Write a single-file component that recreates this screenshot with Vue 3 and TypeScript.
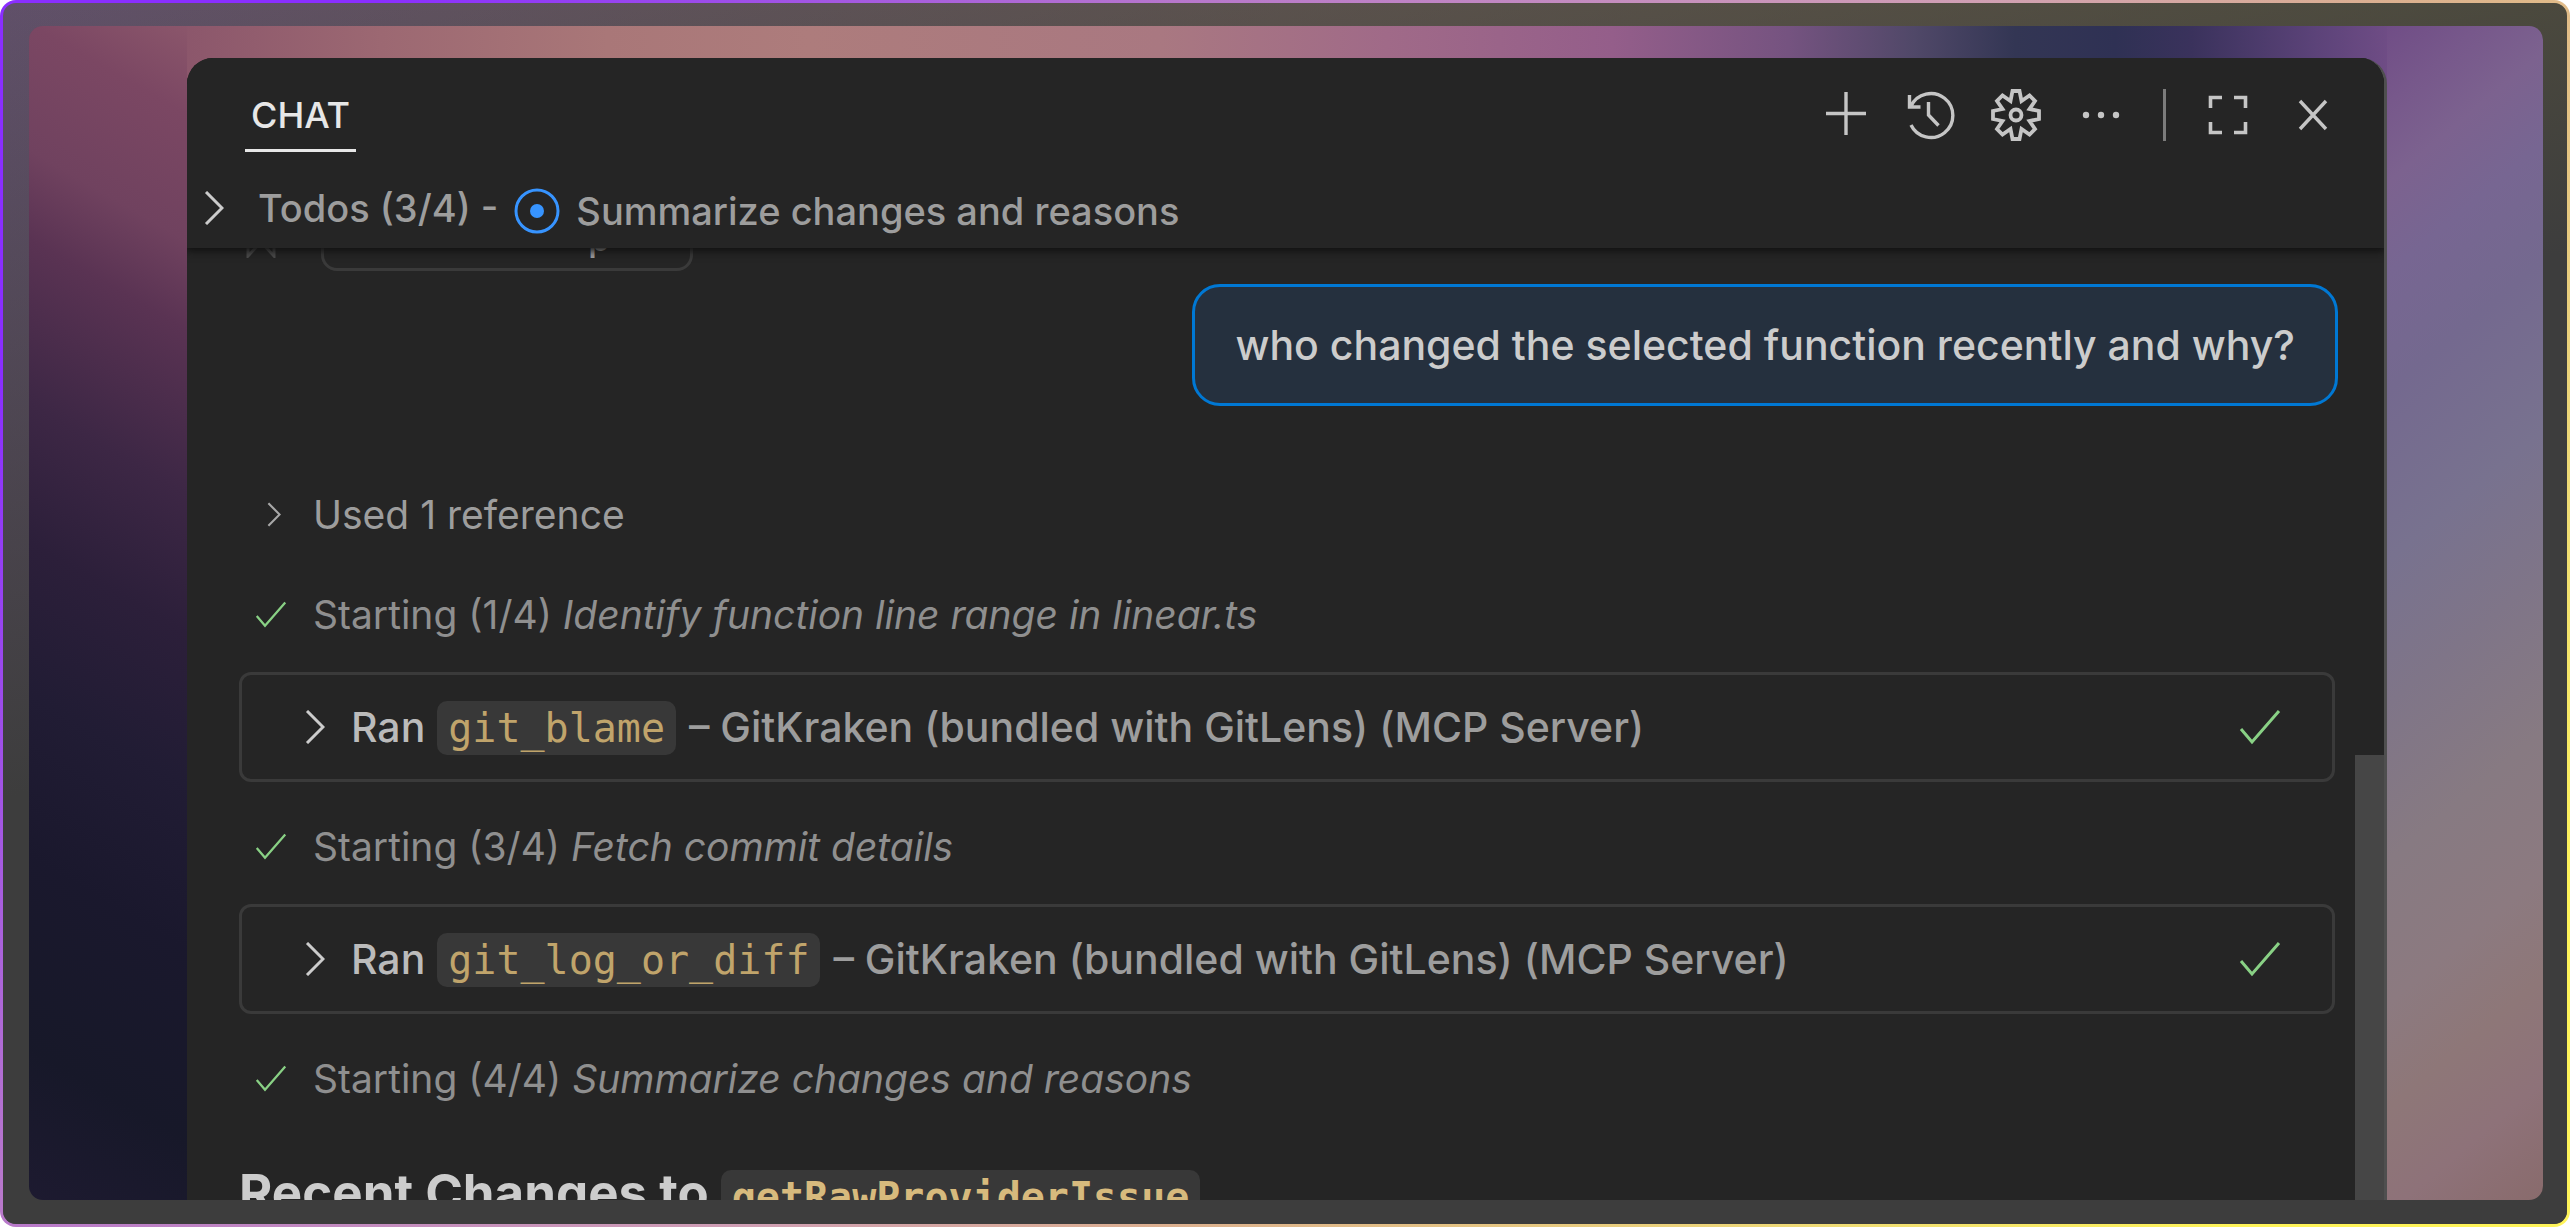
<script setup lang="ts">
interface Step { n: string; title: string; tool?: string }
const steps: Step[] = [
  { n: '1/4', title: 'Identify function line range in linear.ts', tool: 'git_blame' },
  { n: '3/4', title: 'Fetch commit details', tool: 'git_log_or_diff' },
  { n: '4/4', title: 'Summarize changes and reasons' },
]
</script>

<template>
  <div class="frame">
    <div class="backdrop">
      <main class="panel">
        <header class="head">
          <div class="titlebar">
            <h1 class="tab">CHAT</h1>
            <div class="tools">
              <button class="tool" aria-label="New chat">
                <svg viewBox="0 0 52 52" fill="none" stroke="#c5c5c5" stroke-width="3.400"><path d="M6 24.500H46M26 3V46" /></svg>
              </button>
              <button class="tool" aria-label="Chat history">
                <svg viewBox="0 0 52 52" fill="none" stroke="#c5c5c5" stroke-width="3.400"><path d="M4.500 6V18H15.500M6 17A22 22 0 1 1 6 36M23.500 13V26L33.500 36.500" /></svg>
              </button>
              <button class="tool" aria-label="Settings">
                <svg viewBox="0 0 52 52" fill="none" stroke="#c5c5c5" stroke-width="3.800"><path d="M22.500 2H29.500L31.500 12L39.500 6.500L45 12L39.500 20L49 22V30L39.500 32L45 40L39.500 45.500L31.500 40L29.500 50H22.500L20.500 40L12.500 45.500L7 40L12.500 32L3 30V22L12.500 20L7 12L12.500 6.500L20.500 12Z" /><circle cx="26" cy="26" r="5.500" /></svg>
              </button>
              <button class="tool" aria-label="More actions">
                <svg viewBox="0 0 52 52" fill="#c5c5c5"><circle cx="11" cy="26" r="3.200" /><circle cx="26" cy="26" r="3.200" /><circle cx="41" cy="26" r="3.200" /></svg>
              </button>
              <span class="divider"></span>
              <button class="tool" aria-label="Maximize">
                <svg viewBox="0 0 52 52" fill="none" stroke="#c5c5c5" stroke-width="3.600"><path d="M8.500 19V8.500H20M32 8.500H43.500V19M43.500 33V43.500H32M20 43.500H8.500V33" /></svg>
              </button>
              <button class="tool" aria-label="Close">
                <svg viewBox="0 0 52 52" fill="none" stroke="#c5c5c5" stroke-width="3.400"><path d="M13 12L39 40M39 12L13 40" /></svg>
              </button>
            </div>
          </div>
          <button class="todos">
            <svg class="chev" viewBox="0 0 20 34"><path d="M2 1L18 17L2 33" /></svg>
            <span class="count">Todos (3/4) -</span>
            <span class="now">
              <svg class="ring" viewBox="0 0 46 46"><circle cx="23" cy="23" r="21" fill="none" stroke="#3794ff" stroke-width="3" /><circle cx="23" cy="23" r="7" fill="#3794ff" /></svg>
              Summarize changes and reasons
            </span>
          </button>
        </header>

        <section class="body">
          <div class="scrolled">
            <svg class="bookmark" viewBox="0 0 30 40"><path d="M2 0V38L15 24L28 38V0" /></svg>
            <span class="chip">p</span>
          </div>
          <p class="bubble">who changed the selected function recently and why?</p>
          <button class="refs">
            <svg class="chev small" viewBox="0 0 20 34"><path d="M2 1L18 17L2 33" /></svg>
            <span>Used 1 reference</span>
          </button>
          <template v-for="s in steps" :key="s.n">
            <p class="step">
              <svg class="tick" viewBox="0 0 42 36"><path d="M2 20L13 33L40 2" /></svg>
              <span>Starting ({{ s.n }}) <em>{{ s.title }}</em></span>
            </p>
            <button v-if="s.tool" class="run">
              <svg class="chev" viewBox="0 0 20 34"><path d="M2 1L18 17L2 33" /></svg>
              <span class="label"><b>Ran</b> <code>{{ s.tool }}</code> – GitKraken (bundled with GitLens) (MCP Server)</span>
              <svg class="tick big" viewBox="0 0 42 36"><path d="M2 20L13 33L40 2" /></svg>
            </button>
          </template>
          <h2 class="result">Recent Changes to <code>getRawProviderIssue</code></h2>
          <span class="thumb"></span>
        </section>
      </main>
    </div>
  </div>
</template>

<style>
body { margin: 0; background: #fff; }
</style>

<style scoped>
.frame {
  box-sizing: border-box;
  height: 100vh;
  display: flex;
  padding: 23px 24px 24px 26px;
  border: 3px solid transparent;
  border-radius: 16px;
  background:
    linear-gradient(168deg, rgba(61, 61, 61, 0) 0%, #3d3d3d 45%) padding-box,
    linear-gradient(90deg, #605069 0%, #695c55 50%, #69633f 100%) padding-box,
    linear-gradient(135deg, #8a2eff 0%, #8a2eff 10%, #b777cc 31%, #d09fb4 52%, #dcb090 63%, #f0dd75 81%, #fff45a 91%) border-box;
  font-family: Inter, "Liberation Sans", sans-serif;
  font-size: 38px;
  font-weight: 450;
  color: #9d9d9d;
}
.backdrop {
  flex: 1;
  min-width: 0;
  display: flex;
  padding: 32px 156px 0 158px;
  border-radius: 14px;
  overflow: hidden;
  background:
    linear-gradient(210deg, #8b566b 0%, #7b4763 7%, #70425f 17%, #5a3353 24%, #3d2745 37%, #2c1f3a 48%, #211c34 60%, #1a182d 73%, #171829 88%, #1d1a30 100%) left / 158px 100% no-repeat,
    linear-gradient(140deg, #704d86 0%, #77588b 6%, #7c628f 12%, #776692 19%, #74698f 28%, #78728f 41%, #7f7588 52%, #877a82 64%, #8c7a80 75%, #8e7778 83%, #8e7279 91%, #896b6c 100%) right / 156px 100% no-repeat,
    linear-gradient(90deg, #7b4763 0%, #8b566b 6%, #9c6872 14%, #a97778 23%, #ad7c7c 31%, #a97881 45%, #a06a88 54%, #945e8a 63%, #755380 70%, #504868 75%, #333654 79%, #2f3154 83%, #3a325c 86%, #5c4379 91%, #704d86 94%);
}
.panel {
  flex: 1;
  min-width: 0;
  display: flex;
  flex-direction: column;
  box-sizing: border-box;
  border-right: 3px solid #4f4f4f;
  border-radius: 26px 26px 0 0;
  background: #252525;
  overflow: hidden;
}
button {
  border: 0;
  padding: 0;
  margin: 0;
  background: none;
  color: inherit;
  font: inherit;
  text-align: left;
}
.head { position: relative; z-index: 1; height: 190px; background: #252525; box-shadow: 0 2px 8px 1px #101010; }
.titlebar { display: flex; justify-content: space-between; height: 114px; }
.tab {
  box-sizing: border-box;
  margin: 0 0 20px 58px;
  padding: 0 6px;
  border-bottom: 3px solid #e7e7e7;
  font-size: 36px;
  line-height: 114px;
  font-weight: 450;
  color: #e7e7e7;
}
.tools { display: flex; align-items: center; gap: 33px; margin-right: 45px; }
.tool, .tool svg { display: block; width: 52px; height: 52px; }
.divider { width: 3px; height: 52px; margin: 0 3px; background: #7c7c7c; }
.todos { display: flex; align-items: center; height: 72px; padding-left: 17px; }
.chev { width: 20px; height: 34px; fill: none; stroke: #cccccc; stroke-width: 3; }
.count { margin-left: 34px; }
.now { display: flex; align-items: center; padding-top: 5px; }
.ring { width: 46px; height: 46px; margin: 0 16px; }
.body { position: relative; flex: 1; min-height: 0; display: flex; flex-direction: column; padding: 0 49px 0 52px; overflow: hidden; }
.scrolled { display: flex; height: 23px; flex: none; align-items: flex-end; }
.bookmark { width: 30px; height: 40px; margin: 0 45px 13px 7px; fill: none; stroke: #4b4b4b; stroke-width: 3; }
.chip {
  box-sizing: border-box;
  width: 372px;
  height: 60px;
  padding-left: 264px;
  border: 3px solid #3a3a3a;
  border-radius: 16px;
  font-size: 36px;
  line-height: 48px;
}
.bubble {
  align-self: flex-end;
  flex: none;
  box-sizing: border-box;
  height: 122px;
  margin: 13px -3px 0 0;
  padding: 0 40px;
  border: 3px solid #0078d4;
  border-radius: 28px;
  background: #25303e;
  font-size: 41px;
  line-height: 116px;
  color: #cccccc;
}
.refs, .step { flex: none; display: flex; align-items: center; height: 60px; margin: 0; font-size: 39px; font-weight: 400; }
.refs { margin: 78px 0 5px; }
.step { margin-top: 35px; color: #8f8f8f; }
.small { width: 14px; height: 25px; margin: 0 32px 0 28px; stroke: #a8a8a8; }
.tick { width: 32px; height: 27px; margin: 0 26px 0 16px; fill: none; stroke: #89d185; stroke-width: 3; }
.run {
  flex: none;
  display: flex;
  align-items: center;
  box-sizing: border-box;
  height: 110px;
  margin: 28px 0 0;
  padding: 0 51px 0 63px;
  border: 3px solid #3a3a3a;
  border-radius: 12px;
  font-size: 41px;
}
.run + .step { margin-top: 34px; }
.label { flex: 1; margin-left: 26px; }
.label b { font-weight: 450; color: #bbbbbb; }
.label code { margin: 0 2px 0 1px; }
.big { width: 42px; height: 36px; margin: 0; }
code { padding: 4px 11px; border-radius: 10px; background: #383838; color: #c0a46b; font-family: "DejaVu Sans Mono", monospace; font-size: 40px; }
.result { margin: 55px 0 0; font-size: 51px; line-height: 60px; color: #cccccc; white-space: nowrap; }
.result code { color: #d7ba7d; }
.thumb { position: absolute; top: 507px; right: 0; bottom: 0; width: 29px; background: #464646; }
</style>
